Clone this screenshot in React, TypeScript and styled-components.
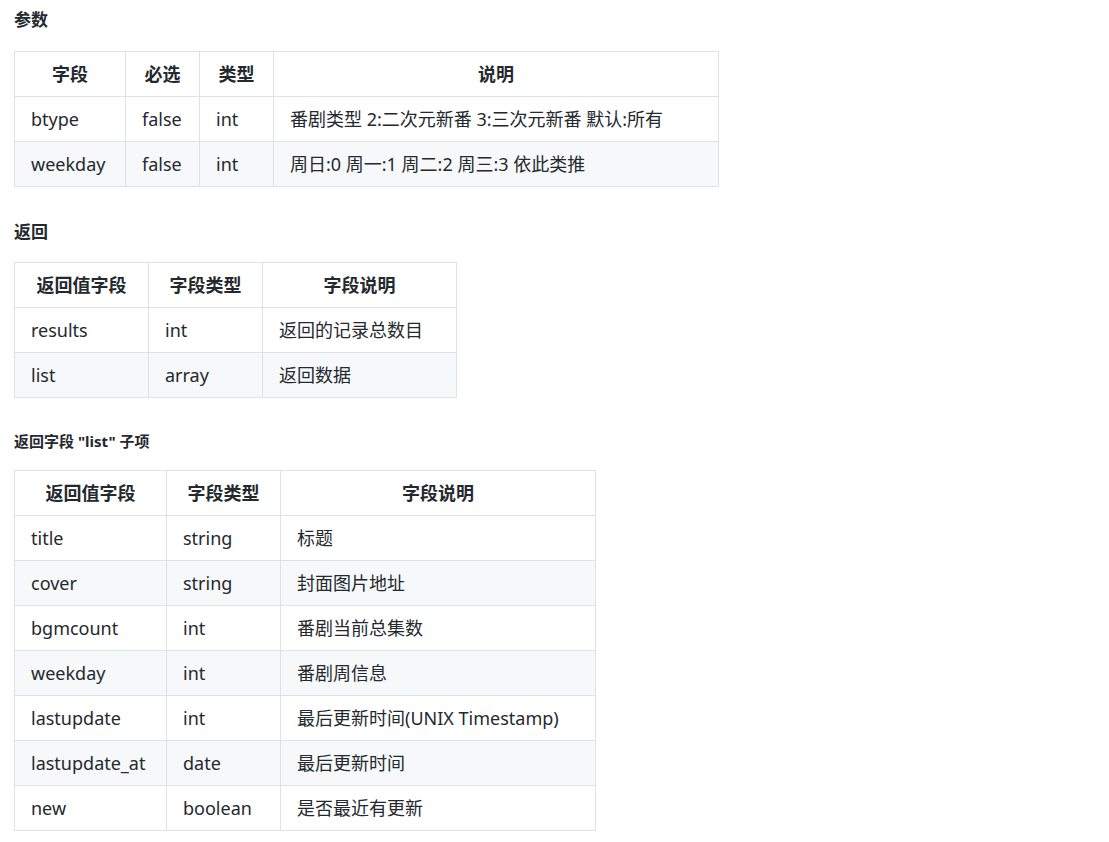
import React from "react";
import styled, { createGlobalStyle } from "styled-components";

const Global = createGlobalStyle`
  body { margin: 0; background: #fff; color: #24292e;
    font-family: "Noto Sans", "Open Sans", "Noto Sans CJK SC", sans-serif; }
`;
const Page = styled.div`padding: 8px 14px;`;
const Heading = styled.h4<{ $size: number; $mb: number }>`
  margin: 0 0 ${p => p.$mb}px; font-size: ${p => p.$size}px; line-height: 24px; font-weight: 700;
`;
const Table = styled.table<{ $mb: number }>`
  border-collapse: collapse; margin-bottom: ${p => p.$mb}px; font-size: 18px;
`;
const Row = styled.tr<{ $alt?: boolean }>`
  background: ${p => (p.$alt ? "#f6f8fa" : "#fff")};
`;
const Th = styled.th`
  border: 1px solid #dfe2e5; padding: 8px 16px; line-height: 28px; font-weight: 700; text-align: center; white-space: nowrap;
`;
const Td = styled.td`
  border: 1px solid #dfe2e5; padding: 8px 16px; line-height: 28px; white-space: nowrap; text-align: left;
`;

type T = { head: string[]; widths: number[]; rows: string[][]; mb: number };
const Tbl = ({ head, widths, rows, mb }: T) => (
  <Table $mb={mb}>
    <colgroup>{widths.map((w, i) => <col key={i} style={{ width: w }} />)}</colgroup>
    <thead><Row>{head.map(h => <Th key={h}>{h}</Th>)}</Row></thead>
    <tbody>
      {rows.map((r, i) => (
        <Row key={i} $alt={i % 2 === 1}>{r.map((c, j) => <Td key={j}>{c}</Td>)}</Row>
      ))}
    </tbody>
  </Table>
);

export default function App() {
  return (
    <Page>
      <Global />
      <Heading $size={17} $mb={19}>参数</Heading>
      <Tbl mb={33} widths={[111, 74, 74, 445]} head={["字段", "必选", "类型", "说明"]} rows={[
        ["btype", "false", "int", "番剧类型 2:二次元新番 3:三次元新番 默认:所有"],
        ["weekday", "false", "int", "周日:0 周一:1 周二:2 周三:3 依此类推"],
      ]} />
      <Heading $size={17} $mb={18}>返回</Heading>
      <Tbl mb={31} widths={[134, 114, 194]} head={["返回值字段", "字段类型", "字段说明"]} rows={[
        ["results", "int", "返回的记录总数目"],
        ["list", "array", "返回数据"],
      ]} />
      <Heading $size={15} $mb={17}>返回字段 "list" 子项</Heading>
      <Tbl mb={0} widths={[152, 114, 315]} head={["返回值字段", "字段类型", "字段说明"]} rows={[
        ["title", "string", "标题"],
        ["cover", "string", "封面图片地址"],
        ["bgmcount", "int", "番剧当前总集数"],
        ["weekday", "int", "番剧周信息"],
        ["lastupdate", "int", "最后更新时间(UNIX Timestamp)"],
        ["lastupdate_at", "date", "最后更新时间"],
        ["new", "boolean", "是否最近有更新"],
      ]} />
    </Page>
  );
}
